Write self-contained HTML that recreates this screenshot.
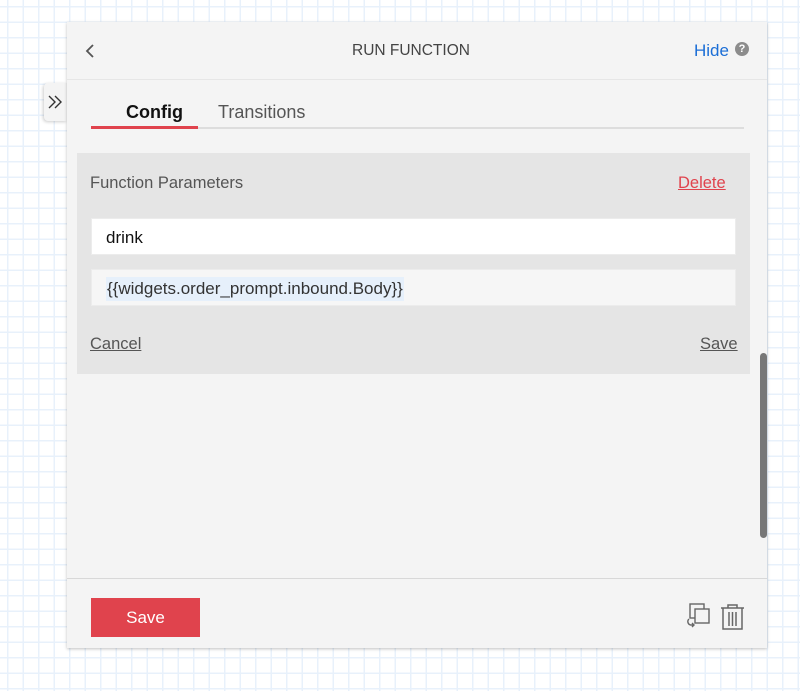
<!DOCTYPE html>
<html><head><style>
body{margin:0;width:800px;height:691px;overflow:hidden;position:relative;font-family:"Liberation Sans",sans-serif;
background-color:#fff;background-image:linear-gradient(#e8f1fb 1.5px,transparent 1.5px),linear-gradient(90deg,#e8f1fb 1.5px,transparent 1.5px);background-size:15.5px 15.5px;background-position:7px 6px;}
.panel{position:absolute;left:67px;top:22px;width:700px;height:626px;background:#f4f4f4;box-shadow:0 1px 3px rgba(0,0,0,.25);}
.hdr{position:absolute;left:0;top:0;width:700px;height:57px;border-bottom:1px solid #e6e6e6;}
.t{position:absolute;white-space:nowrap;}
.side{position:absolute;left:44px;top:83px;width:23px;height:38px;background:#f4f4f4;border-radius:4px 0 0 4px;box-shadow:-1px 1px 3px rgba(0,0,0,.2);}
.box{position:absolute;left:10px;top:131px;width:673px;height:221px;background:#e5e5e5;}
.inp{position:absolute;left:14px;width:645px;height:37px;background:#fff;border:1px solid #ececec;box-sizing:border-box;}
</style></head><body>
<div class="side"><svg width="23" height="38"><path d="M5 13l6 6-6 6M11 13l6 6-6 6" fill="none" stroke="#333" stroke-width="1.4"/></svg></div>
<div class="panel">
 <div class="hdr">
  <svg class="t" style="left:17px;top:21px" width="12" height="16"><path d="M9 2L3 8l6 6" fill="none" stroke="#555" stroke-width="1.8"/></svg>
  <div class="t" style="left:285px;top:20px;font-size:15.5px;color:#444">RUN FUNCTION</div>
  <div class="t" style="left:627px;top:19px;font-size:17px;color:#1b6ed6">Hide</div>
  <div class="t" style="left:668px;top:20px;width:14px;height:14px;border-radius:50%;background:#8c8c8c;color:#fff;font-size:11px;font-weight:bold;text-align:center;line-height:14px">?</div>
 </div>
 <div class="t" style="left:59px;top:80px;font-size:18px;font-weight:bold;color:#111">Config</div>
 <div class="t" style="left:151px;top:80px;font-size:18px;color:#555">Transitions</div>
 <div class="t" style="left:24px;top:105px;width:653px;height:2px;background:#ddd"></div>
 <div class="t" style="left:24px;top:104px;width:107px;height:3px;background:#e0434d"></div>
 <div class="box">
  <div class="t" style="left:13px;top:21px;font-size:16.5px;color:#555">Function Parameters</div>
  <div class="t" style="left:601px;top:21px;font-size:16.5px;color:#e0434d;text-decoration:underline">Delete</div>
  <div class="inp" style="top:65px"><div class="t" style="left:14px;top:9px;font-size:17px;color:#111">drink</div></div>
  <div class="inp" style="top:116px;background:#f6f6f6"><div class="t" style="left:14px;top:7px;height:24px;padding:0 1px;background:#e6f0fb;font-size:17px;line-height:24px;color:#333">{{widgets.order_prompt.inbound.Body}}</div></div>
  <div class="t" style="left:13px;top:182px;font-size:16.5px;color:#555;text-decoration:underline">Cancel</div>
  <div class="t" style="left:623px;top:182px;font-size:16.5px;color:#555;text-decoration:underline">Save</div>
 </div>
 <div class="t" style="left:693px;top:331px;width:7px;height:185px;background:#777;border-radius:4px"></div>
 <div class="t" style="left:0;top:556px;width:700px;height:1px;background:#d8d8d8"></div>
 <div class="t" style="left:24px;top:576px;width:109px;height:39px;background:#e0434d;color:#fff;font-size:17px;text-align:center;line-height:39px">Save</div>
 <svg class="t" style="left:616px;top:580px" width="64" height="30">
  <rect x="7" y="2" width="14" height="14" fill="#f4f4f4" stroke="#666" stroke-width="1.4"/>
  <rect x="12" y="7" width="14" height="14" fill="#f4f4f4" stroke="#666" stroke-width="1.4"/>
  <path d="M6 17a3.5 3.5 0 0 0 1.5 6l3 0M9 21l2 2-2 2" fill="none" stroke="#666" stroke-width="1.4"/>
  <path d="M38 6h23M45 6v-3h9v3M40 6v21h19V6M46 10v14M49.5 10v14M53 10v14" fill="none" stroke="#666" stroke-width="1.5"/>
 </svg>
</div>
</body></html>
